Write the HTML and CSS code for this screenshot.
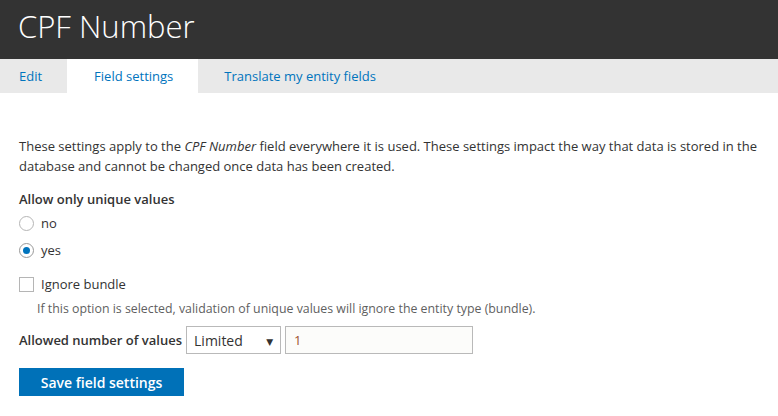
FILE: index.html
```html
<!DOCTYPE html>
<html>
<head>
<meta charset="utf-8">
<link rel="stylesheet" href="styles.css">
</head>
<body>
<header class="head">
  <h1 class="title">CPF Number</h1>
</header>
<nav class="tabs">
  <a class="tab tab-first" href="#">Edit</a>
  <a class="tab tab-active" href="#">Field settings</a>
  <a class="tab" href="#">Translate my entity fields</a>
</nav>
<main class="content">
  <p class="intro">These settings apply to the <em>CPF Number</em> field everywhere it is used. These settings impact the way that data is stored in the database and cannot be changed once data has been created.</p>
  <div class="fieldset">
    <div class="label">Allow only unique values</div>
    <label class="option"><span class="radio"></span>no</label>
    <label class="option"><span class="radio radio-on"></span>yes</label>
  </div>
  <div class="check-item">
    <label class="option"><span class="checkbox"></span>Ignore bundle</label>
    <div class="desc">If this option is selected, validation of unique values will ignore the entity type (bundle).</div>
  </div>
  <div class="card-row">
    <span class="label inline">Allowed number of values</span>
    <span class="select">Limited<span class="arrow">▼</span></span>
    <span class="input">1</span>
  </div>
  <button class="btn">Save field settings</button>
</main>
</body>
</html>
```
FILE: styles.css
```css
html, body { margin: 0; padding: 0; background: #fff; }
body { font-family: "Open Sans", "DejaVu Sans", sans-serif; color: #333; font-size: 13px; }
.head { background: #333; height: 59px; display: flex; align-items: center; padding-left: 18px; }
.title { margin: 0; font-weight: 300; font-size: 31px; color: #fff; line-height: 1; position: relative; top: -3px; }
.tabs { background: #e9e9e9; height: 34px; display: flex; }
.tab { display: flex; align-items: center; padding: 0 25px 0 26px; color: #0074bd; text-decoration: none; font-size: 13px; }
.tab-first { padding-left: 19px; }
.tab-active { background: #fff; padding-left: 27px; }
.content { padding: 43px 19px 0 19px; }
.intro { margin: 0 0 13px 0; line-height: 20px; }
.fieldset { margin-bottom: 14px; }
.label { font-weight: 600; line-height: 20px; margin-bottom: 4px; }
.option { display: flex; align-items: center; height: 20px; margin-bottom: 6px; }
.fieldset .option { margin-bottom: 7px; }
.radio { width: 13px; height: 13px; border: 1px solid #b5b5b5; border-radius: 50%; margin-right: 7px; box-sizing: content-box; display: inline-block; position: relative; }
.radio-on { border-color: #999; }
.radio-on::after { content: ""; position: absolute; left: 3px; top: 3px; width: 7px; height: 7px; border-radius: 50%; background: #0074bd; }
.checkbox { width: 13px; height: 13px; border: 1px solid #b5b5b5; margin-right: 7px; display: inline-block; }
.desc { font-size: 12.35px; color: #5f5f5f; padding-left: 18px; line-height: 18px; margin-top: 0; }
.check-item { margin-bottom: 8px; }
.card-row { display: flex; align-items: center; margin-bottom: 14px; }
.inline { margin: 0 4px 0 0; }
.select { box-sizing: border-box; width: 95px; height: 28px; border: 1px solid #b9b9b9; display: flex; align-items: center; padding: 0 0 0 7px; font-size: 14px; position: relative; background: #fff; }
.arrow { position: absolute; right: 7px; top: 8px; font-size: 9px; }
.input { box-sizing: border-box; width: 188px; height: 28px; border: 1px solid #b9b9b9; background: #fcfcfa; margin-left: 4px; display: flex; align-items: center; padding-left: 8px; color: #a0522d; font-size: 13px; }
.btn { font-family: inherit; background: #0071b8; color: #fff; font-weight: 600; font-size: 14px; border: 0; width: 165px; height: 28px; padding: 0; }
```
